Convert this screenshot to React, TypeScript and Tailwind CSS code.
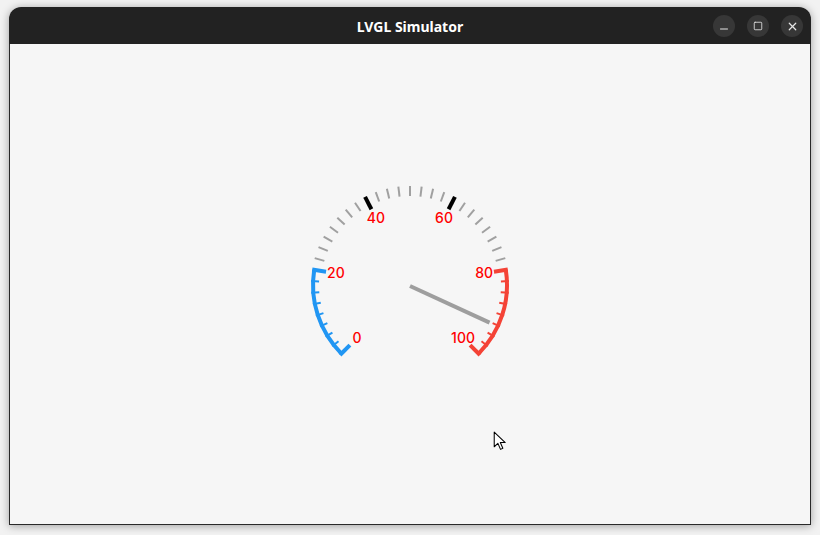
import { Minus, Square, X } from "lucide-react";

const CX = 110;
const CY = 110;
const R = 99;

// value (0..100) -> screen angle in degrees, 270° sweep starting at 135°
const angleOf = (v: number) => 135 + v * 2.7;

const pt = (deg: number, r: number) => {
  const a = (deg * Math.PI) / 180;
  return [CX + r * Math.cos(a), CY + r * Math.sin(a)];
};

const BLUE = "#2196f3";
const RED = "#f44336";

function tickColor(v: number, major: boolean) {
  if (v <= 20) return BLUE;
  if (v >= 80) return RED;
  return major ? "#000000" : "#a0a0a0";
}

function arcPath(from: number, to: number, r: number) {
  const [x1, y1] = pt(angleOf(from), r);
  const [x2, y2] = pt(angleOf(to), r);
  return `M ${x1} ${y1} A ${r} ${r} 0 0 1 ${x2} ${y2}`;
}

function Gauge({ value }: { value: number }) {
  const ticks = Array.from({ length: 41 }, (_, i) => i);
  const labels = [0, 20, 40, 60, 80, 100];
  const [nx, ny] = pt(angleOf(value), 88);

  return (
    <svg width={220} height={220} viewBox="0 0 220 220">
      <path d={arcPath(0, 20, R - 2)} stroke={BLUE} strokeWidth={4} fill="none" />
      <path d={arcPath(80, 100, R - 2)} stroke={RED} strokeWidth={4} fill="none" />
      {ticks.map((i) => {
        const v = i * 2.5;
        const major = i % 8 === 0;
        const inSection = v <= 20 || v >= 80;
        const len = major ? 14 : inSection ? 8 : 10;
        const [x1, y1] = pt(angleOf(v), R);
        const [x2, y2] = pt(angleOf(v), R - len);
        return (
          <line
            key={i}
            x1={x1}
            y1={y1}
            x2={x2}
            y2={y2}
            stroke={tickColor(v, major)}
            strokeWidth={major ? 4 : 2}
          />
        );
      })}
      {labels.map((v) => {
        const [x, y] = pt(angleOf(v), 75);
        return (
          <text
            key={v}
            x={x}
            y={y + 5}
            textAnchor="middle"
            fill="#ff0000"
            fontSize={14}
            fontWeight={500}
            fontFamily="Inter, sans-serif"
          >
            {v}
          </text>
        );
      })}
      <line x1={CX} y1={CY + 1} x2={nx} y2={ny} stroke="#9e9e9e" strokeWidth={4} />
    </svg>
  );
}

function TitleButton({ children }: { children: React.ReactNode }) {
  return (
    <div className="w-[22px] h-[22px] rounded-full bg-[#373737] flex items-center justify-center text-[#e6e6e6]">
      {children}
    </div>
  );
}

export default function App() {
  return (
    <div className="w-[820px] h-[535px] bg-[#f2f2f2] pt-[7px] pl-[9px] overflow-hidden">
      <div className="w-[802px] h-[518px] flex flex-col rounded-t-[12px] shadow-[0_1px_8px_rgba(0,0,0,0.35)]">
        <div className="h-[37px] shrink-0 bg-[#222222] rounded-t-[12px] flex items-center relative">
          <div className="flex-1 text-center text-white text-[14px] font-bold font-['Noto_Sans',sans-serif] pt-[1px]">
            LVGL Simulator
          </div>
          <div className="absolute right-[8px] top-[8px] flex gap-[12px]">
            <TitleButton>
              <Minus size={12} strokeWidth={2} className="translate-y-[3px]" />
            </TitleButton>
            <TitleButton>
              <Square size={10} strokeWidth={2} />
            </TitleButton>
            <TitleButton>
              <X size={13} strokeWidth={2.2} />
            </TitleButton>
          </div>
        </div>
        <div className="flex-1 bg-[#f6f6f6] border border-t-0 border-[#2a2a2a] flex items-center justify-center relative">
          <div className="translate-y-[1px]">
            <Gauge value={92.7} />
          </div>
          <svg
            className="absolute left-[483px] top-[387px]"
            width={14}
            height={21}
            viewBox="0 0 13 20"
          >
            <path
              d="M1 1 L1 15 L4.5 11.8 L7 17.5 L9.2 16.5 L6.8 11 L11.5 11 Z"
              fill="#ffffff"
              stroke="#000000"
              strokeWidth={1}
              strokeLinejoin="round"
            />
          </svg>
        </div>
      </div>
    </div>
  );
}
